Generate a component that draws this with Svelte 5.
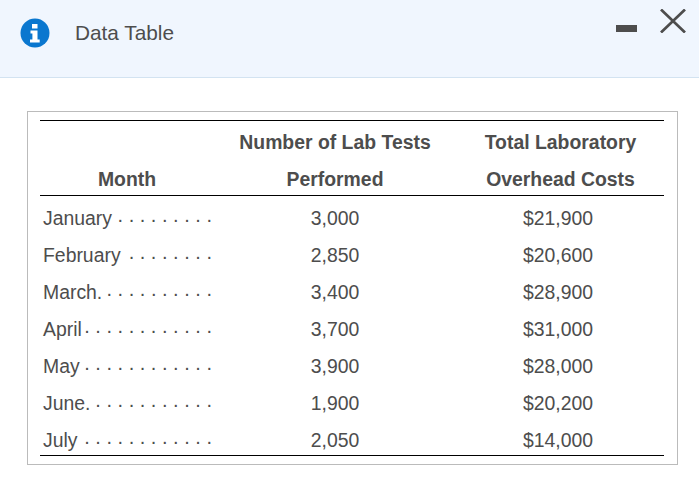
<script>
  const rows = [
    { month: 'January', dots: 9, tests: '3,000', costs: '$21,900' },
    { month: 'February', dots: 8, tests: '2,850', costs: '$20,600' },
    { month: 'March.', dots: 10, tests: '3,400', costs: '$28,900' },
    { month: 'April', dots: 12, tests: '3,700', costs: '$31,000' },
    { month: 'May', dots: 12, tests: '3,900', costs: '$28,000' },
    { month: 'June.', dots: 11, tests: '1,900', costs: '$20,200' },
    { month: 'July', dots: 12, tests: '2,050', costs: '$14,000' }
  ];
</script>

<div class="dialog">
  <header class="top">
    <svg class="info" width="30" height="30" viewBox="0 0 30 30">
      <circle cx="15" cy="15" r="14.5" fill="#0a77cf" />
      <path d="M12 6h5.5v4.5H12z M10.5 12.5h7v9h2.2v3h-9.7v-3h2.4v-6h-1.9z" fill="#fff" />
    </svg>
    <span class="title">Data Table</span>
    <div class="controls">
      <span class="minimize"></span>
      <svg class="close" width="26" height="24" viewBox="0 0 26 24">
        <path d="M1 .5 L25 23.5 M25 .5 L1 23.5" stroke="#4d4d4d" stroke-width="2.7" fill="none" />
      </svg>
    </div>
  </header>

  <div class="body">
    <div class="box">
      <table>
        <thead>
          <tr>
            <th></th>
            <th>Number of Lab Tests</th>
            <th>Total Laboratory</th>
          </tr>
          <tr class="last-head">
            <th>Month</th>
            <th>Performed</th>
            <th>Overhead Costs</th>
          </tr>
        </thead>
        <tbody>
          {#each rows as row}
            <tr>
              <td class="month">
                <span>{row.month}</span>
                <span class="dots">{Array(row.dots).fill('.').join(' ')}</span>
              </td>
              <td>{row.tests}</td>
              <td class="costs">{row.costs}</td>
            </tr>
          {/each}
        </tbody>
      </table>
    </div>
  </div>
</div>

<style>
  :global(body) {
    margin: 0;
    background: #fff;
  }

  .dialog {
    width: 699px;
    height: 480px;
    overflow: hidden;
    font-family: "Liberation Sans", Arial, sans-serif;
    color: #4d4d4d;
  }

  .top {
    height: 77px;
    background: #f0f6fe;
    border-bottom: 1px solid #d3e3f1;
    display: flex;
    align-items: flex-start;
  }

  .info {
    margin: 18px 0 0 20px;
  }

  .title {
    margin: 21px 0 0 25px;
    font-size: 20.8px;
    line-height: 24px;
  }

  .controls {
    margin-left: auto;
    display: flex;
    align-items: flex-start;
    padding: 9px 13px 0 0;
    gap: 23px;
  }

  .minimize {
    width: 21px;
    height: 7px;
    margin-top: 16px;
    background: #4d4d4d;
  }

  .body {
    padding: 33px 21px 0 27px;
  }

  .box {
    border: 1px solid #bbb;
    height: 344px;
    padding: 8px 12px 0 12px;
  }

  table {
    width: 624px;
    border-collapse: separate;
    border-spacing: 0;
    table-layout: fixed;
    border-top: 1px solid #000;
    border-bottom: 1px solid #000;
    font-size: 19.4px;
  }

  th:nth-child(1), td:nth-child(1) {
    width: 171px;
  }

  th:nth-child(2), td:nth-child(2) {
    width: 248px;
  }

  th, td {
    height: 37px;
    box-sizing: border-box;
    padding: 7px 0 0;
    line-height: 24px;
    text-align: center;
    white-space: nowrap;
  }

  th {
    font-weight: bold;
    padding-top: 5px;
  }

  th:first-child {
    padding-left: 3px;
  }

  th:last-child {
    padding-right: 2px;
  }

  .last-head th {
    height: 38px;
    border-bottom: 1px solid #000;
  }

  td.month {
    text-align: left;
    padding-left: 3px;
    position: relative;
  }

  td.costs {
    padding-right: 7px;
  }

  .dots {
    position: absolute;
    right: -1px;
    top: 7px;
    font-size: 20px;
  }
</style>
